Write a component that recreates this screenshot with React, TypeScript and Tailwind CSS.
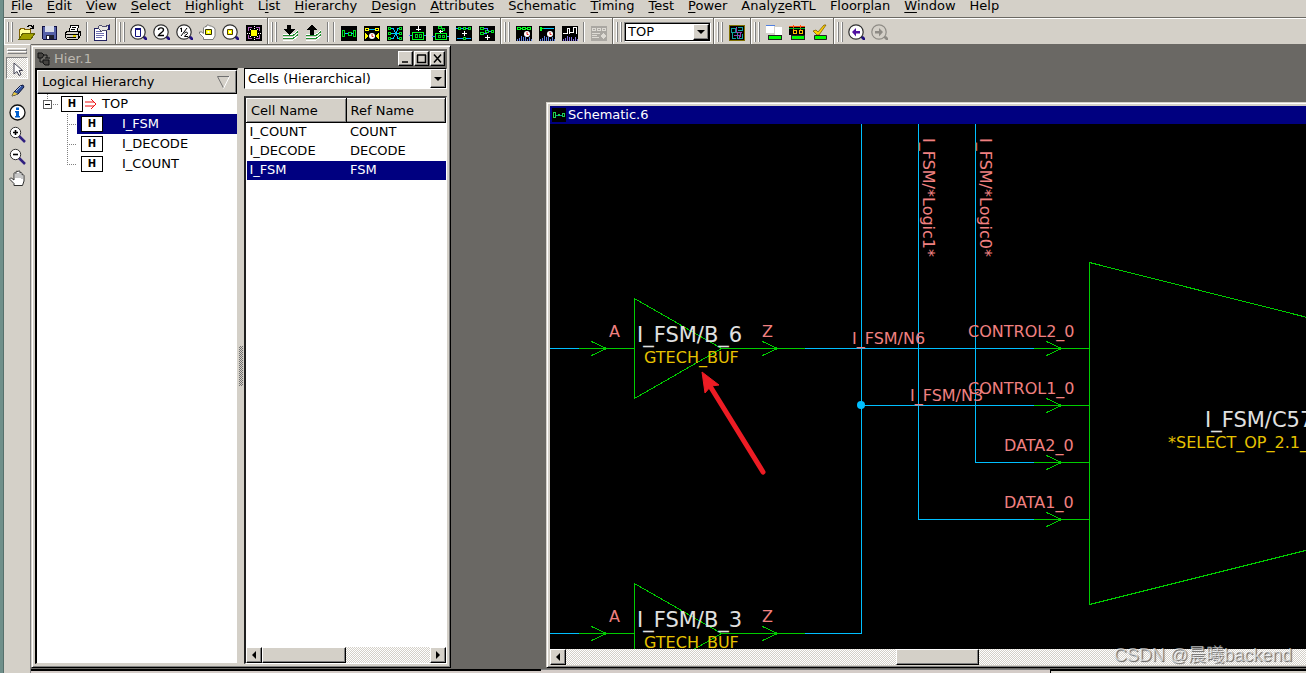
import { useState, type ReactNode } from "react";

const menus: [string, number][] = [
  ["File", 0],
  ["Edit", 0],
  ["View", 0],
  ["Select", 0],
  ["Highlight", 0],
  ["List", 1],
  ["Hierarchy", 0],
  ["Design", 0],
  ["Attributes", 0],
  ["Schematic", 1],
  ["Timing", 0],
  ["Test", 0],
  ["Power", 0],
  ["AnalyzeRTL", 5],
  ["Floorplan", 5],
  ["Window", 0],
  ["Help", -1],
];

const cells = [
  { cell: "I_COUNT", ref: "COUNT" },
  { cell: "I_DECODE", ref: "DECODE" },
  { cell: "I_FSM", ref: "FSM" },
];

const raised =
  "border border-t-white border-l-white border-r-black border-b-black bg-[#d4d0c8] shadow-[inset_-1px_-1px_0_#808080]";
const dither =
  "bg-[repeating-conic-gradient(#ffffff_0_25%,#d4d0c8_0_50%)] bg-[length:2px_2px]";

function Icon({ children, crisp = true }: { children: ReactNode; crisp?: boolean }) {
  return (
    <svg
      width="17"
      height="17"
      viewBox="0 0 17 17"
      fill="none"
      shapeRendering={crisp ? "crispEdges" : "auto"}
      aria-hidden="true"
    >
      {children}
    </svg>
  );
}

function Lens({ children, muted = false }: { children: ReactNode; muted?: boolean }) {
  return (
    <Icon crisp={false}>
      <path d="M12 13l3 3h2v-2l-2-2z" fill={muted ? "#8e8b85" : "#201080"} />
      <circle
        cx="8"
        cy="8"
        r="7.2"
        fill={muted ? "#d4d0c8" : "#fff"}
        stroke={muted ? "#8e8b85" : "#303030"}
        strokeWidth="1.2"
      />
      {children}
    </Icon>
  );
}

const openIcon = (
  <Icon>
    <path d="M1 15V5h1V4h4v1h6v4H5z" fill="#ffff99" stroke="#806000" />
    <path d="M1 15l4-6h12l-4 6z" fill="#a0a000" stroke="#606000" />
    <path d="M9 2h1V1h3v1h1v1h1M15 1v3h-3" stroke="#000" />
  </Icon>
);

const saveIcon = (
  <Icon>
    <path d="M1 2h14v13H2l-1-1z" fill="#5560a8" stroke="#101040" />
    <path d="M4 2h9v6H4z" fill="#d8dce8" />
    <path d="M5 11h8v4H5z" fill="#202030" />
    <path d="M6 12h2v3H6z" fill="#fff" />
  </Icon>
);

const printIcon = (
  <Icon>
    <path d="M5 7l2-6h8l-2 6z" fill="#fff" stroke="#000" />
    <path d="M8 3.5h4M7 5.5h4" stroke="#000" />
    <path d="M1 9l3-2h12v5l-2 3H3l-2-2z" fill="#d4d0c8" stroke="#000" />
    <path d="M1 10.5h13M14 15v-5l2-3M3 13.5h9" stroke="#000" />
    <path d="M9 11h3v2H9z" fill="#e0d000" />
  </Icon>
);

const propsIcon = (
  <Icon>
    <path d="M1 4h12v12H1z" fill="#fff" stroke="#202060" />
    <path d="M3 7.5h4M3 9.5h8M3 11.5h8M3 13.5h6" stroke="#7070b0" />
    <path d="M5 3l2-2 4 2 5-2v4l-4 2-2-1-2 2z" fill="#e8e6e0" stroke="#505070" />
    <path d="M15 1h2v5h-2z" fill="#202070" />
  </Icon>
);

const zoomWindowIcon = (
  <Lens>
    <path d="M5.5 4.5h5v8h-5z" fill="#fff" stroke="#101080" />
    <path d="M5 4h6v2H5z" fill="#101080" />
  </Lens>
);

const zoomTwoIcon = (
  <Lens>
    <path d="M5.5 6c0-2.8 5-2.8 5 0 0 2-3.5 3-5 5.5h5.5" stroke="#000" strokeWidth="1.4" />
  </Lens>
);

const zoomHalfIcon = (
  <Lens>
    <path d="M4 5l1.5-1v4M11 4l-6 8" stroke="#000" />
    <path d="M8.5 9.5c0-1.8 3.5-1.8 3 0 0 1-3 1.5-3 3h3.5" stroke="#000" />
  </Lens>
);

const panIcon = (
  <Icon crisp={false}>
    <path
      d="M4.500 15.500v-2L.5 9.500V8h2l2 1.500V4l1.500-1.500L7 3l1-2h1.500l1 1h2l1 1h1l1.500 2v7l-2 3.500z"
      fill="#fff"
      stroke="#606060"
      strokeWidth=".8"
    />
    <path d="M6.500 5.500h6v5h-6z" fill="#ffff00" stroke="#303000" />
    <path d="M8.500 7h2v2h-2z" fill="#fff" />
  </Icon>
);

const zoomSelIcon = (
  <Lens>
    <path d="M5.5 5.500h5v5h-5z" fill="#ffff00" stroke="#504000" />
    <path d="M7 7h2v2H7z" fill="#fff" />
  </Lens>
);

const fitIcon = (
  <Icon>
    <path d="M1 1h16v16H1z" fill="#000" />
    <path d="M3.5 7V3.5H7M11 3.5h3.5V7M14.5 11v3.5H11M7 14.5H3.5V11" stroke="#b060c0" />
    <path d="M9 2v3M9 13v3M2 9h3M13 9h3" stroke="#fff" strokeDasharray="1 1" />
    <path d="M6 6h6v6H6z" fill="#ffff00" />
    <path d="M5 5h1v1H5zM12 5h1v1h-1zM5 12h1v1H5zM12 12h1v1h-1z" fill="#fff" />
  </Icon>
);

function LayerIcon({ up = false }: { up?: boolean }) {
  return (
    <Icon>
      <path d="M1 10.5h10l5-4M1 13.5h10l5-4M1 16h10l5-4" stroke="#fff" />
      <path d="M1 11.5h10l5-4M1 14.5h10l5-4" stroke="#209030" />
      <path d={up ? "M7 1l6 5h-4v5H5V6H1z" : "M5 1h4v4h4l-6 6-6-6h4z"} fill="#000" />
    </Icon>
  );
}

function Chip({ children }: { children: ReactNode }) {
  return (
    <Icon>
      <path d="M1 2h16v15H1z" fill="#000" />
      {children}
    </Icon>
  );
}

function Clock({ x, y }: { x: number; y: number }) {
  return (
    <g shapeRendering="auto">
      <circle cx={x} cy={y} r="3" fill="#fff" />
      <path d={`M${x} ${y - 2}v2.500h1.500`} stroke="#e02020" />
    </g>
  );
}

const schematicIcon = (
  <Chip>
    <path d="M2.5 6.5h2v6h-2zM8 8.5h3v3H8zM13.5 6.5h2v6h-2z" stroke="#00e020" />
    <path d="M5 9.5h3M11 9.5h2" stroke="#00c8ff" />
  </Chip>
);

const pathTimingIcon = (
  <Chip>
    <path d="M2.5 4.5h3v2h-3zM12.5 4.5h3v2h-3z" stroke="#ffff00" />
    <path d="M6 5.5h6" stroke="#00c8ff" />
    <path d="M2 9l4 3-4 3zM16 9l-4 3 4 3z" fill="#ffff00" />
    <Clock x={9} y={12} />
  </Chip>
);

const fanIcon = (
  <Chip>
    <path d="M2.5 3.5h2v2h-2zM2.5 8.5h2v2h-2zM2.5 13.5h2v2h-2zM13.5 3.5h2v2h-2zM13.5 8.5h2v2h-2zM13.5 13.5h2v2h-2z" stroke="#00e020" />
    <path d="M5 4.5h2l3 5 2-5h1M5 14.5h2l3-5 2 5h1M5 9.5h8" stroke="#00c8ff" />
  </Chip>
);

const downOneIcon = (
  <Chip>
    <path d="M9.5 2v5M7 5.5h5" stroke="#fff" />
    <path d="M3.5 8.5h11v7h-11z" stroke="#00ff20" />
    <path d="M6.5 10.5h2v3h-2zM10.5 10.5h2v3h-2z" stroke="#00d020" />
    <path d="M0 11.5h3M15 11.5h3" stroke="#4080ff" />
  </Chip>
);

const downTwoIcon = (
  <Chip>
    <path d="M6.5 2.5h3v2h-3zM10.5 4.5h2v2h-2z" stroke="#00e020" />
    <path d="M8.5 6v3M7 7.5h4" stroke="#fff" />
    <path d="M3.5 9.5h11v6h-11z" stroke="#00ff20" />
    <path d="M6.5 11.5h2v2h-2zM10.5 11.5h2v2h-2z" stroke="#00d020" />
    <path d="M0 12.5h3M15 12.5h3" stroke="#4080ff" />
  </Chip>
);

const collapseIcon = (
  <Chip>
    <path d="M3.5 3.5h2v2h-2zM8.5 3.5h2v2h-2zM13.5 3.5h2v2h-2zM8.5 13.5h2v2h-2z" stroke="#00e020" />
    <path d="M1 4.5h2M6 4.5h2M11 4.5h2M2 14.5h6M11 14.5h5" stroke="#00a8ff" />
    <path d="M9.5 7v5M7 9.5h5" stroke="#fff" />
  </Chip>
);

const expandIcon = (
  <Chip>
    <path d="M2.5 3.5h3v2h-3zM7.5 6.5h3v2h-3zM2.5 8.5h3v2h-3zM13.5 6.5h2v2h-2z" stroke="#00e020" />
    <path d="M6 4.5h3v2M6 9.5h3M11 7.5h2" stroke="#4080ff" />
    <path d="M9.5 11v5M7 13.5h5" stroke="#fff" />
  </Chip>
);

const histBars =
  "M2.5 17v-2M4.5 17v-3M6.5 17v-5M8.5 17v-4M10.5 17v-4M12.5 17v-2M14.5 17v-4M16.5 17v-2";

const slackIcon = (
  <Chip>
    <path d="M2.5 3.5h3v2h-3zM7.5 3.5h3v2h-3zM12.5 3.5h3v2h-3zM6 4.5h1M11 4.5h1" stroke="#00ff20" />
    <path d={histBars} stroke="#6080e0" />
    <Clock x={12} y={10} />
  </Chip>
);

const netHistIcon = (
  <Chip>
    <path d="M2 3h1v3H2zM3 4.5h4" stroke="#00ff20" />
    <path d="M6 4.5h10" stroke="#00c8ff" />
    <path d={histBars} stroke="#6080e0" />
    <Clock x={12} y={10} />
  </Chip>
);

const waveIcon = (
  <Chip>
    <path d="M2 9.5h4v-5h2M8.5 4v6M8.5 8.5h4v-5h3v6" stroke="#fff" />
    <path d={histBars} stroke="#8070e0" />
  </Chip>
);

const disabledIcon = (
  <Icon>
    <path d="M1 2h16v15H1z" fill="#aaa7a2" />
    <path d="M2.5 4.5h3v2h-3zM7.5 4.5h3v2h-3zM12.5 4.5h3v2h-3zM2 9.5h8M2 11.5h5M2 13.5h7" stroke="#dedbd5" />
    <path d="M13 9l3 3-3 3-3-3z" fill="#dedbd5" />
  </Icon>
);

const layoutIcon = (
  <Icon>
    <path d="M1.5 1.5h15v15h-15z" fill="#000" stroke="#807000" />
    <path d="M3 4.5h4v4H3zM4.5 9v5H8M10 3.5h4v3h-4M9.5 8v6h5v-4" stroke="#10a0a0" />
    <path d="M8.5 3v5h5M6 11.5h5v3M12.5 9v4" stroke="#9040b0" />
  </Icon>
);

const reportWindowIcon = (
  <Icon>
    <path d="M1 1h8v8H1zM10 3h7v8h-7z" fill="#fff" />
    <path d="M1 1h9v1H1z" fill="#5080e0" />
    <path d="M3 11.5h13v4H3z" fill="#00ff00" stroke="#202020" />
  </Icon>
);

const reportPathIcon = (
  <Icon>
    <path d="M1 3h16v8H1z" fill="#000" />
    <path d="M1 2.5h16M5.5 1v5M12.5 1v5" stroke="#ff5010" />
    <path d="M1 4.5h16" stroke="#00b020" />
    <path d="M5.5 6.5h3v3h-3zM11.5 6.5h3v3h-3z" stroke="#ffc000" />
    <path d="M3 11.5h13v4H3z" fill="#00ff00" stroke="#202020" />
  </Icon>
);

const reportCheckIcon = (
  <Icon crisp={false}>
    <path d="M2 7l3-1 2 2 6-7h2L8 11H6z" fill="#ffd000" stroke="#806000" strokeWidth=".8" />
    <path d="M3.5 11.5h12v4h-12z" fill="#00ff00" stroke="#202020" />
  </Icon>
);

const backIcon = (
  <Lens>
    <path d="M4 8l4-4v3h4v2.5H8v3z" fill="#5010a0" />
  </Lens>
);

const forwardIcon = (
  <Lens muted>
    <path d="M12 8L8 4v3H4v2.5h4v3z" fill="#8e8b85" />
  </Lens>
);

function Handle() {
  return (
    <span className="flex gap-0.5">
      <span className="w-0.5 border-r border-l border-r-[#808080] border-l-white" />
      <span className="w-0.5 border-r border-l border-r-[#808080] border-l-white" />
    </span>
  );
}

function Separator() {
  return <span className="mx-0.5 w-0.5 border-l border-r border-l-[#808080] border-r-white" />;
}

function ToolGroup({
  children,
  label,
  last = false,
}: {
  children: ReactNode;
  label: string;
  last?: boolean;
}) {
  return (
    <div
      role="group"
      aria-label={label}
      className={`flex gap-0.5 border-l border-l-white px-0.5 pt-1 pb-0.5 ${
        last ? "" : "border-r border-r-[#6b6963]"
      }`}
    >
      <Handle />
      <div className="flex items-stretch">{children}</div>
    </div>
  );
}

function ToolButton({ label, children }: { label: string; children: ReactNode }) {
  return (
    <button type="button" aria-label={label} className="flex w-[23px] items-center justify-center">
      {children}
    </button>
  );
}

function Arrow({ dir }: { dir: "left" | "right" | "down" }) {
  const d = { left: "M6 0v8L2 4z", right: "M2 0v8l4-4z", down: "M0 2h8L4 6z" }[dir];
  return (
    <svg width="8" height="8" viewBox="0 0 8 8" aria-hidden="true">
      <path d={d} fill="#000" />
    </svg>
  );
}

function MenuBar() {
  return (
    <nav className="flex h-[17px] gap-[14px] pl-[7px] leading-3">
      {menus.map(([name, key]) => (
        <button key={name} type="button" className="h-3 whitespace-nowrap">
          {key < 0 ? (
            name
          ) : (
            <>
              {name.slice(0, key)}
              <span className="underline underline-offset-2">{name[key]}</span>
              {name.slice(key + 1)}
            </>
          )}
        </button>
      ))}
    </nav>
  );
}

function ToolBar() {
  return (
    <div className="flex h-[27px] border-t border-t-[#6b6963] shadow-[inset_0_1px_0_#fff]">
      <ToolGroup label="File">
        <ToolButton label="Open">{openIcon}</ToolButton>
        <ToolButton label="Save">{saveIcon}</ToolButton>
        <ToolButton label="Print">{printIcon}</ToolButton>
        <Separator />
        <ToolButton label="Properties">{propsIcon}</ToolButton>
      </ToolGroup>
      <ToolGroup label="Zoom">
        <ToolButton label="Zoom window">{zoomWindowIcon}</ToolButton>
        <ToolButton label="Zoom in 2x">{zoomTwoIcon}</ToolButton>
        <ToolButton label="Zoom out 2x">{zoomHalfIcon}</ToolButton>
        <ToolButton label="Pan to selection">{panIcon}</ToolButton>
        <ToolButton label="Zoom to selection">{zoomSelIcon}</ToolButton>
        <ToolButton label="Fit">{fitIcon}</ToolButton>
      </ToolGroup>
      <ToolGroup label="Schematics">
        <ToolButton label="Move down">
          <LayerIcon />
        </ToolButton>
        <ToolButton label="Move up">
          <LayerIcon up />
        </ToolButton>
        <Separator />
        <Separator />
        <ToolButton label="Design schematic">{schematicIcon}</ToolButton>
        <ToolButton label="Path schematic">{pathTimingIcon}</ToolButton>
        <ToolButton label="Fanin and fanout">{fanIcon}</ToolButton>
        <ToolButton label="Add one level">{downOneIcon}</ToolButton>
        <ToolButton label="Add two levels">{downTwoIcon}</ToolButton>
        <ToolButton label="Collapse">{collapseIcon}</ToolButton>
        <ToolButton label="Expand">{expandIcon}</ToolButton>
      </ToolGroup>
      <ToolGroup label="Histograms">
        <ToolButton label="Path slack">{slackIcon}</ToolButton>
        <ToolButton label="Net capacitance">{netHistIcon}</ToolButton>
        <ToolButton label="Waveform">{waveIcon}</ToolButton>
        <Separator />
        <ToolButton label="Timing analysis">{disabledIcon}</ToolButton>
      </ToolGroup>
      <ToolGroup label="Design">
        <label className="relative flex w-[87px] border border-t-[#808080] border-r-white border-b-white border-l-[#808080]">
          <select
            aria-label="Current design"
            className="w-full appearance-none border border-black bg-white pl-0.5 leading-4 outline-none"
          >
            <option>TOP</option>
          </select>
          <span
            className={`pointer-events-none absolute inset-y-px right-px flex w-4 items-center justify-center ${raised}`}
          >
            <Arrow dir="down" />
          </span>
        </label>
      </ToolGroup>
      <ToolGroup label="Layout">
        <ToolButton label="Layout view">{layoutIcon}</ToolButton>
      </ToolGroup>
      <ToolGroup label="Reports">
        <ToolButton label="Report window">{reportWindowIcon}</ToolButton>
        <ToolButton label="Report path">{reportPathIcon}</ToolButton>
        <ToolButton label="Check design">{reportCheckIcon}</ToolButton>
      </ToolGroup>
      <ToolGroup label="History" last>
        <ToolButton label="Back">{backIcon}</ToolButton>
        <ToolButton label="Forward">{forwardIcon}</ToolButton>
      </ToolGroup>
    </div>
  );
}

const sideTools = [
  {
    label: "Highlighter",
    icon: (
      <Icon crisp={false}>
        <path d="M3 14l2-4 6-6 3-1 1 2-6 7z" fill="#30509a" stroke="#101840" />
        <path d="M3 14l2-4 4 2z" fill="#e8c840" />
        <path d="M7 9l5-5" stroke="#b0c8f0" />
      </Icon>
    ),
  },
  {
    label: "Info",
    icon: (
      <Icon crisp={false}>
        <circle cx="8.5" cy="8.5" r="7.5" fill="#fff" stroke="#101010" strokeWidth="1.3" />
        <path d="M7 3.5h3V6H7zM6 7h4v5h1v1.500H6V12h1V8.500H6z" fill="#0060d0" />
      </Icon>
    ),
  },
  {
    label: "Zoom in",
    icon: (
      <Icon crisp={false}>
        <path d="M10 10l6 6" stroke="#302080" strokeWidth="2.5" />
        <circle cx="6.5" cy="6.5" r="5.2" fill="#fff" stroke="#303030" />
        <path d="M4 6.5h5M6.5 4v5" stroke="#000" strokeWidth="1.6" />
      </Icon>
    ),
  },
  {
    label: "Zoom out",
    icon: (
      <Icon crisp={false}>
        <path d="M10 10l6 6" stroke="#302080" strokeWidth="2.5" />
        <circle cx="6.5" cy="6.5" r="5.2" fill="#fff" stroke="#303030" />
        <path d="M4 6.5h5" stroke="#000" strokeWidth="1.6" />
      </Icon>
    ),
  },
  {
    label: "Pan",
    icon: (
      <Icon crisp={false}>
        <path
          d="M5 15.5v-2L1 9.500c-.5-1.500 1-2 2-1l2 1.500V3.500c0-1 1.500-1 2 0V2c0-1.200 2-1.200 2 0v-.5c.5-1 2-1 2 .5v1c.8-1 2-.5 2 .7V5c1-.8 2-.3 2 1v5l-1.500 4.500z"
          fill="#fff"
          stroke="#303030"
        />
        <path d="M7 4v4M9 3v5M11 3v5M13 5v4" stroke="#606060" strokeWidth=".7" />
      </Icon>
    ),
  },
];

function SideBar() {
  return (
    <div
      role="toolbar"
      aria-label="Mouse tools"
      className="flex w-[27px] shrink-0 flex-col items-center border-t border-r border-t-white border-r-[#808080] bg-[#d4d0c8] pt-[3px]"
    >
      <span className="h-[3px] w-5 border border-t-white border-r-[#808080] border-b-[#808080] border-l-white" />
      <span className="h-[3px] w-5 border border-t-white border-r-[#808080] border-b-[#808080] border-l-white" />
      <button
        type="button"
        aria-label="Select"
        aria-pressed="true"
        className={`mt-[3px] flex h-[22px] w-[22px] items-center justify-center border border-t-[#808080] border-r-white border-b-white border-l-[#808080] ${dither}`}
      >
        <Icon crisp={false}>
          <path d="M5 3v11l3-2.500 2 4 2-1-2-4h3.500z" fill="#fff" stroke="#404050" />
        </Icon>
      </button>
      {sideTools.map((t) => (
        <button
          key={t.label}
          type="button"
          aria-label={t.label}
          className="flex h-[22px] w-[22px] items-center justify-center"
        >
          {t.icon}
        </button>
      ))}
    </div>
  );
}

function ModuleBadge() {
  return (
    <span className="flex h-4 w-[22px] items-center justify-center border border-black bg-white text-[10px] leading-3 font-bold text-black">
      H
    </span>
  );
}

function HierTree() {
  const [selected, setSelected] = useState("I_FSM");
  return (
    <section className="flex w-[203px] shrink-0 flex-col border-t-2 border-r border-b border-l-2 border-t-black border-r-[#d4d0c8] border-b-[#d4d0c8] border-l-black bg-white">
      <div className={`flex h-6 items-center justify-between pr-1.5 pl-1 ${raised}`}>
        Logical Hierarchy
        <svg width="13" height="13" viewBox="0 0 13 13" fill="none" aria-hidden="true">
          <path d="M12 .5H.5L6.5 12" stroke="#707070" />
          <path d="M12.5 .5L6.5 12.5" stroke="#fff" />
        </svg>
      </div>
      <div className="flex h-5 items-center pl-1.5">
        <svg width="18" height="20" viewBox="0 0 18 20" fill="none" shapeRendering="crispEdges" aria-hidden="true">
          <path d="M4.5 0v6M10 10.5h6" stroke="#808080" strokeDasharray="1 1" />
          <path d="M.5 6.5h8v8h-8z" fill="#fff" stroke="#606060" />
          <path d="M2 10.5h5" stroke="#000" />
        </svg>
        <ModuleBadge />
        <svg width="15" height="12" viewBox="0 0 15 12" fill="none" className="mr-1" aria-hidden="true">
          <path d="M2 4h9M2 8h9M8 1l5 5-5 5" stroke="#f01010" />
        </svg>
        TOP
      </div>
      <ul>
        {["I_FSM", "I_DECODE", "I_COUNT"].map((name, i) => (
          <li key={name} className="flex h-5 pl-[30px]">
            <svg width="10" height="20" fill="none" shapeRendering="crispEdges" aria-hidden="true">
              <path
                d={i < 2 ? "M.5 0v20M0 10.5h10" : "M.5 0v10M0 10.5h10"}
                stroke="#808080"
                strokeDasharray="1 1"
              />
            </svg>
            <button
              type="button"
              onClick={() => setSelected(name)}
              className={`flex flex-1 items-center gap-[19px] pl-1 ${
                selected === name ? "bg-[#000080] text-white" : ""
              }`}
            >
              <ModuleBadge />
              {name}
            </button>
          </li>
        ))}
      </ul>
    </section>
  );
}

function ScrollButton({ dir }: { dir: "left" | "right" }) {
  return (
    <button
      type="button"
      aria-label={`Scroll ${dir}`}
      className={`flex h-4 w-4 items-center justify-center ${raised}`}
    >
      <Arrow dir={dir} />
    </button>
  );
}

function CellList() {
  return (
    <section className="flex min-w-0 flex-1 flex-col">
      <label className="relative flex h-[21px] border border-t-black border-r-white border-b-white border-l-black bg-white">
        <select aria-label="Object list" className="w-full appearance-none pl-[3px] leading-4 outline-none">
          <option>Cells (Hierarchical)</option>
        </select>
        <span
          className={`pointer-events-none absolute inset-y-0 right-0 flex w-4 items-center justify-center ${raised}`}
        >
          <Arrow dir="down" />
        </span>
      </label>
      <div className="mt-[7px] flex flex-1 flex-col border-t-2 border-r border-b border-l-2 border-t-[#404040] border-r-white border-b-white border-l-[#202020] bg-white">
        <table className="w-full table-fixed border-collapse text-left">
          <thead>
            <tr className="h-6">
              <th className={`pl-1 font-normal ${raised}`}>Cell Name</th>
              <th className={`pl-1 font-normal ${raised}`}>Ref Name</th>
            </tr>
          </thead>
          <tbody>
            {cells.map((c) => (
              <tr
                key={c.cell}
                className={c.cell === "I_FSM" ? "h-[19px] bg-[#000080] text-white" : "h-[19px]"}
              >
                <td className="pl-[3px] leading-4">{c.cell}</td>
                <td className="pl-1 leading-4">{c.ref}</td>
              </tr>
            ))}
          </tbody>
        </table>
        <div className={`mt-auto flex h-4 ${dither}`}>
          <ScrollButton dir="left" />
          <div className={`mr-auto w-[42%] ${raised}`} />
          <ScrollButton dir="right" />
        </div>
      </div>
    </section>
  );
}

function WindowButton({ label, d }: { label: string; d: string }) {
  return (
    <button type="button" aria-label={label} className={`flex h-[15px] w-[15px] items-center justify-center ${raised}`}>
      <svg width="11" height="11" viewBox="0 0 11 11" fill="none" aria-hidden="true">
        <path d={d} stroke="#000" strokeWidth="1.5" />
      </svg>
    </button>
  );
}

function HierWindow() {
  return (
    <div className="mt-px flex w-[420px] shrink-0 flex-col border border-t-[#d4d0c8] border-r-black border-b-black border-l-[#d4d0c8] bg-[#d4d0c8] p-[3px] shadow-[inset_1px_1px_0_#fff,inset_-1px_-1px_0_#808080]">
      <header className="flex h-[19px] items-center bg-[#6a6864] pr-0.5 pl-0.5 text-[#bdb9b1]">
        <svg width="13" height="15" viewBox="0 0 13 15" fill="none" aria-hidden="true">
          <path d="M1 2h4l2 2-2 3H1zM8 7h5M6 9h6v5H8l-2-2z" fill="#454340" stroke="#111" />
          <path d="M3 7v4h3M7 4h3v3" stroke="#111" />
        </svg>
        <span className="ml-1 flex-1">Hier.1</span>
        <div className="flex gap-px">
          <WindowButton label="Minimize" d="M2 9h6" />
          <WindowButton label="Maximize" d="M1 2h9M1.5 2v7.5h8V2" />
          <WindowButton label="Close" d="M2 1.5l7 8M9 1.5l-7 8" />
        </div>
      </header>
      <div className="flex min-h-0 flex-1">
        <HierTree />
        <div className="flex w-1.5 shrink-0 items-center justify-center">
          <span className="h-10 w-1 bg-[repeating-conic-gradient(#707070_0_25%,#d4d0c8_0_50%)] bg-[length:2px_2px]" />
        </div>
        <CellList />
      </div>
    </div>
  );
}

// input or output pin marker, the tip sits at x
function Pin({ x, y }: { x: number; y: number }) {
  return <path d={`M${x - 15} ${y - 7}l15 7l-15 7`} />;
}

const inputs = [
  { name: "CONTROL2_0", x: 968, y: 348, from: 804 },
  { name: "CONTROL1_0", x: 968, y: 405, from: 861 },
  { name: "DATA2_0", x: 1004, y: 462, from: 975 },
  { name: "DATA1_0", x: 1004, y: 519, from: 918 },
];

const buffers = [
  { name: "I_FSM/B_6", y: 348 },
  { name: "I_FSM/B_3", y: 633 },
];

function Schematic() {
  return (
    <svg className="min-h-0 w-full flex-1 bg-black" role="img" aria-label="Schematic.6">
      <g transform="translate(-550 -124)" fontSize="16">
        <g transform="translate(.5 .5)" fill="none" shapeRendering="crispEdges">
          <g stroke="#00bfff">
            <path d="M861 123V633H804M918 123V519M975 123V462" />
            {inputs.map((p) => (
              <path key={p.name} d={`M${p.from} ${p.y}H1033`} />
            ))}
            {buffers.map((b) => (
              <path key={b.name} d={`M549 ${b.y}h29`} />
            ))}
          </g>
          <g stroke="#00cc00">
            {buffers.map((b) => (
              <g key={b.name}>
                <path d={`M578 ${b.y}h56M634 ${b.y - 50}l87 50l-87 50zM721 ${b.y}h83`} />
                <Pin x={606} y={b.y} />
                <Pin x={777} y={b.y} />
              </g>
            ))}
            {inputs.map((p) => (
              <g key={p.name}>
                <path d={`M1033 ${p.y}h56`} />
                <Pin x={1061} y={p.y} />
              </g>
            ))}
            <path d="M1505 367L1089 262V604L1505 500" />
          </g>
        </g>
        <circle cx="861" cy="405" r="4" fill="#00bfff" />
        <g fill="#f08080">
          {buffers.map((b) => (
            <g key={b.name}>
              <text x="609" y={b.y - 11}>A</text>
              <text x="762" y={b.y - 11}>Z</text>
            </g>
          ))}
          <text x="852" y="344">I_FSM/N6</text>
          <text x="910" y="401">I_FSM/N3</text>
          {inputs.map((p) => (
            <text key={p.name} x={p.x} y={p.y - 11}>
              {p.name}
            </text>
          ))}
          <text transform="translate(923 138) rotate(90)">I_FSM/*Logic1*</text>
          <text transform="translate(980 138) rotate(90)">I_FSM/*Logic0*</text>
        </g>
        {buffers.map((b) => (
          <g key={b.name}>
            <text x="637" y={b.y - 6} fontSize="21" fill="#e0e0e0">
              {b.name}
            </text>
            <text x="644" y={b.y + 15} fill="#e6c200">
              GTECH_BUF
            </text>
          </g>
        ))}
        <text x="1205" y="427" fontSize="21" fill="#e0e0e0">
          I_FSM/C57
        </text>
        <text x="1168" y="448" fill="#e6c200">
          *SELECT_OP_2.1_2
        </text>
        <path d="M763 472L710 386" stroke="#ed1c24" strokeWidth="5" strokeLinecap="round" />
        <path d="M702 372l17 13l-8 1l-6 7z" fill="#ed1c24" stroke="#ed1c24" />
      </g>
    </svg>
  );
}

function SchematicWindow() {
  return (
    <div className="mt-[58px] ml-[95px] flex min-w-0 flex-1 flex-col border-t border-b border-l border-t-[#d4d0c8] border-b-black border-l-[#d4d0c8] bg-[#d4d0c8] pt-[3px] pb-0.5 pl-[3px] shadow-[inset_1px_1px_0_#fff,inset_0_-1px_0_#808080]">
      <header className="flex h-[18px] items-center gap-0.5 bg-[#000080] pl-0.5 text-white">
        <svg width="14" height="14" viewBox="0 0 14 14" fill="none" shapeRendering="crispEdges" aria-hidden="true">
          <path d="M0 0h14v14H0z" fill="#000" />
          <path d="M1.5 4.5h2v5h-2zM6.5 6.5h1v1h-1zM10.5 5.5h2v3h-2z" stroke="#20d050" />
          <path d="M4 7.5h2M8 7.5h2" stroke="#00a0a0" />
        </svg>
        Schematic.6
      </header>
      <Schematic />
      <div className={`flex h-4 ${dither}`}>
        <ScrollButton dir="left" />
        <div className={`ml-[330px] w-[83px] ${raised}`} />
      </div>
    </div>
  );
}

export default function App() {
  return (
    <div className="relative flex h-screen overflow-hidden bg-[#d4d0c8] font-['DejaVu_Sans',sans-serif] text-[13px] leading-4 text-black">
      <div className="w-1 shrink-0 border-r border-r-[#56706c] bg-[#6f8f8a]" />
      <div className="flex min-w-0 flex-1 flex-col">
        <MenuBar />
        <ToolBar />
        <div className="flex min-h-0 flex-1">
          <SideBar />
          <main className="flex min-w-0 flex-1 flex-col bg-[#6a6864]">
            <div className="flex min-h-0 flex-1">
              <HierWindow />
              <SchematicWindow />
            </div>
            <div className="mt-px flex h-1 shrink-0">
              <div className="w-[510px] border-t-2 border-t-black bg-[#d4ccc8]" />
              <div className="w-[509px] border-t border-t-[#808080] bg-[#d4ccc8]" />
              <div className="flex-1 border-t-2 border-l border-black bg-[#d4d0c8]" />
            </div>
          </main>
        </div>
      </div>
      <div className="absolute right-[14px] bottom-[6px] font-['Liberation_Sans','Noto_Sans_CJK_SC',sans-serif] text-lg leading-6 whitespace-nowrap text-white/60 [text-shadow:1px_1px_1px_#606060]">
        CSDN @晨曦backend
      </div>
    </div>
  );
}
